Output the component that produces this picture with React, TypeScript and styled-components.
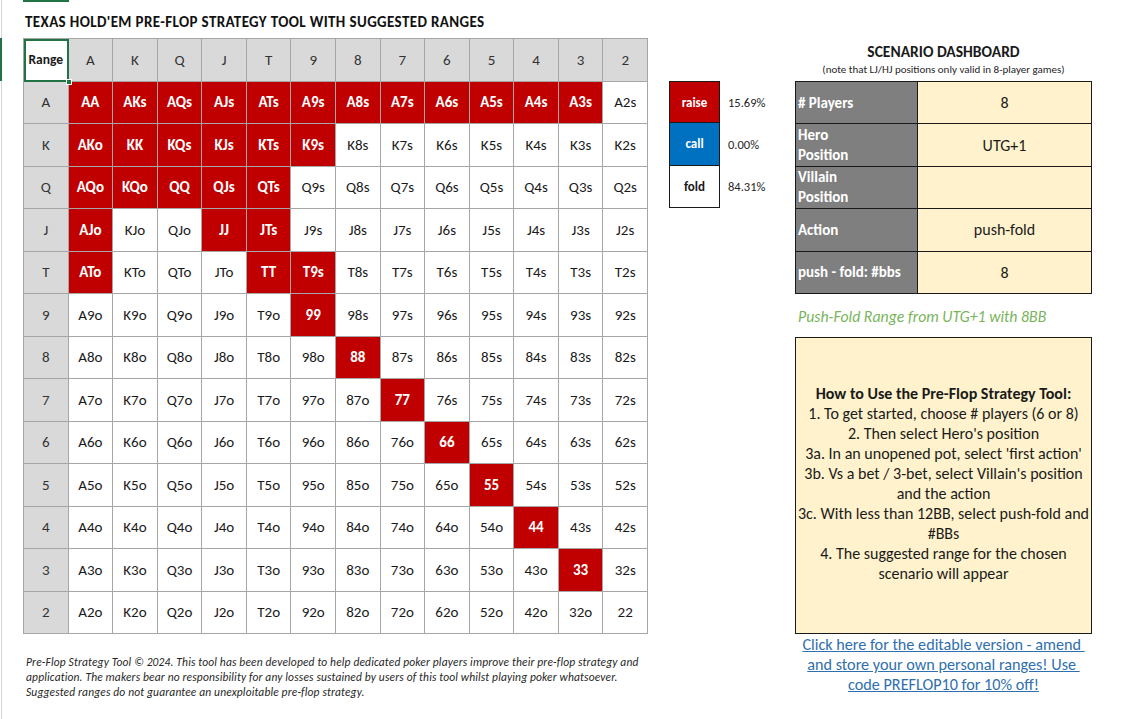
import React from "react";
import styled, { createGlobalStyle } from "styled-components";

const FONT = `"Carlito", "Lato", "Liberation Sans", sans-serif`;

const GlobalStyle = createGlobalStyle`
  html, body { margin: 0; padding: 0; background: #ffffff; }
  body { font-family: ${FONT}; color: #1a1a1a; }
  * { box-sizing: border-box; }
`;

const Page = styled.div`
  display: flex;
  width: 1140px;
  height: 719px;
  overflow: hidden;
  background: #fff;
`;

const Gutter = styled.div`
  width: 2px;
  flex: none;
  border-right: 1px solid #d6d6d6;
  padding-top: 38px;
`;

const GutterMark = styled.div`
  width: 2px;
  height: 43px;
  background: #217346;
`;

const Content = styled.div`
  flex: 1;
  padding-left: 21px;
  display: flex;
  flex-direction: column;
`;

const ColMark = styled.div`
  width: 46px;
  height: 2px;
  background: #217346;
`;

const Title = styled.h1`
  margin: 0;
  height: 36px;
  padding-top: 11px;
  padding-left: 2px;
  font-size: 15px;
  line-height: 18px;
  font-weight: 700;
  color: #111;
  letter-spacing: 0.38px;
  white-space: nowrap;
`;

const MainRow = styled.div`
  display: flex;
  align-items: flex-start;
`;

const LeftCol = styled.div`
  display: flex;
  flex-direction: column;
  width: 625px;
`;

const RangeGrid = styled.div`
  display: grid;
  grid-template-columns: repeat(14, 1fr);
  grid-auto-rows: 42.5px;
  width: 625px;
  border-top: 1px solid #a6a6a6;
  border-left: 1px solid #a6a6a6;
`;

type CellKind = "head" | "raise" | "fold" | "corner";

const Cell = styled.div<{ $kind: CellKind }>`
  position: relative;
  display: flex;
  align-items: center;
  justify-content: center;
  border-right: 1px solid #a6a6a6;
  border-bottom: 1px solid #a6a6a6;
  font-size: 15px;
  white-space: nowrap;
  background: ${(p) =>
    p.$kind === "head" ? "#d9d9d9" : p.$kind === "raise" ? "#c00000" : "#ffffff"};
  color: ${(p) => (p.$kind === "raise" ? "#ffffff" : p.$kind === "head" ? "#333" : "#1a1a1a")};
  font-weight: ${(p) => (p.$kind === "raise" || p.$kind === "corner" ? 700 : 400)};
  ${(p) =>
    p.$kind === "corner"
      ? `outline: 2px solid #217346; outline-offset: -2px; font-size: 13.5px;`
      : ""}
`;

const Handle = styled.span`
  position: absolute;
  right: -4px;
  bottom: -4px;
  width: 6px;
  height: 6px;
  background: #217346;
  border: 1px solid #fff;
  z-index: 2;
`;

const Footer = styled.div`
  margin: 21px 0 0 3px;
  font-size: 11.5px;
  line-height: 15px;
  font-style: italic;
  color: #262626;
  letter-spacing: 0.15px;
`;

const FooterLine = styled.span`
  display: block;
  white-space: nowrap;
`;

const Legend = styled.div`
  margin-left: 21px;
  margin-top: 43px;
  width: 126px;
  display: grid;
  grid-template-columns: 51px 1fr;
  grid-auto-rows: 42.3px;
  column-gap: 8px;
`;

const LegendBox = styled.div<{ $bg: string; $fg: string }>`
  display: flex;
  align-items: center;
  justify-content: center;
  background: ${(p) => p.$bg};
  color: ${(p) => p.$fg};
  border: 1px solid #1a1a1a;
  margin-top: -1px;
  font-size: 13px;
  font-weight: 700;
  &:first-child { margin-top: 0; }
`;

const LegendPct = styled.div`
  display: flex;
  align-items: center;
  font-size: 12.5px;
  color: #262626;
`;

const Dash = styled.div`
  width: 297px;
  display: flex;
  flex-direction: column;
`;

const DashTitle = styled.div`
  text-align: center;
  font-weight: 700;
  font-size: 15.5px;
  line-height: 18px;
  padding-top: 5px;
`;

const DashNote = styled.div`
  text-align: center;
  font-size: 11px;
  line-height: 13px;
  margin-top: 2px;
  height: 18px;
  color: #262626;
`;

const DashTable = styled.div`
  display: grid;
  grid-template-columns: 122px 1fr;
  grid-auto-rows: 42.4px;
  border-top: 1px solid #1a1a1a;
  border-left: 1px solid #1a1a1a;
`;

const DashLabel = styled.div`
  display: flex;
  align-items: center;
  padding-left: 2px;
  background: #7f7f7f;
  color: #fff;
  font-weight: 700;
  font-size: 15px;
  line-height: 20px;
  border-right: 1px solid #1a1a1a;
  border-bottom: 1px solid #1a1a1a;
`;

const DashValue = styled.div`
  display: flex;
  align-items: center;
  justify-content: center;
  background: #fff2cc;
  font-size: 16px;
  border-right: 1px solid #1a1a1a;
  border-bottom: 1px solid #1a1a1a;
`;

const RangeCaption = styled.div`
  margin-top: 13px;
  height: 30px;
  padding-left: 3px;
  font-style: italic;
  font-size: 15.8px;
  line-height: 20px;
  color: #79b45b;
`;

const HowTo = styled.div`
  height: 297px;
  padding-bottom: 3px;
  background: #fff2cc;
  border: 1px solid #1a1a1a;
  display: flex;
  flex-direction: column;
  align-items: center;
  justify-content: center;
  font-size: 16px;
  line-height: 20px;
  color: #1a1a1a;
  text-align: center;
`;

const HowLine = styled.span<{ $bold?: boolean }>`
  display: block;
  white-space: nowrap;
  font-weight: ${(p) => (p.$bold ? 700 : 400)};
`;

const Promo = styled.a`
  display: block;
  text-align: center;
  font-size: 16.2px;
  line-height: 20px;
  color: #2f6fae;
  text-decoration: underline;
  padding-top: 1px;
`;

const PromoLine = styled.span`
  display: block;
  white-space: pre;
`;

const RANKS = ["A", "K", "Q", "J", "T", "9", "8", "7", "6", "5", "4", "3", "2"];

const RAISE = new Set([
  "AA", "AKs", "AQs", "AJs", "ATs", "A9s", "A8s", "A7s", "A6s", "A5s", "A4s", "A3s",
  "AKo", "KK", "KQs", "KJs", "KTs", "K9s",
  "AQo", "KQo", "QQ", "QJs", "QTs",
  "AJo", "JJ", "JTs",
  "ATo", "TT", "T9s",
  "99", "88", "77", "66", "55", "44", "33",
]);

function hand(i: number, j: number): string {
  if (i === j) return RANKS[i] + RANKS[j];
  if (j > i) return RANKS[i] + RANKS[j] + "s";
  return RANKS[j] + RANKS[i] + "o";
}

export default function App() {
  const cells: React.ReactNode[] = [];
  cells.push(
    <Cell key="corner" $kind="corner">
      Range
      <Handle />
    </Cell>
  );
  RANKS.forEach((r) =>
    cells.push(
      <Cell key={"h" + r} $kind="head">
        {r}
      </Cell>
    )
  );
  RANKS.forEach((r, i) => {
    cells.push(
      <Cell key={"r" + r} $kind="head">
        {r}
      </Cell>
    );
    RANKS.forEach((_, j) => {
      const h = hand(i, j);
      cells.push(
        <Cell key={h} $kind={RAISE.has(h) ? "raise" : "fold"}>
          {h}
        </Cell>
      );
    });
  });

  return (
    <>
      <GlobalStyle />
      <Page>
        <Gutter>
          <GutterMark />
        </Gutter>
        <Content>
          <ColMark />
          <Title>TEXAS HOLD'EM PRE-FLOP STRATEGY TOOL WITH SUGGESTED RANGES</Title>
          <MainRow>
            <LeftCol>
              <RangeGrid>{cells}</RangeGrid>
              <Footer>
                <FooterLine>
                  Pre-Flop Strategy Tool © 2024. This tool has been developed to help dedicated poker
                  players improve their pre-flop strategy and
                </FooterLine>
                <FooterLine>
                  application. The makers bear no responsibility for any losses sustained by users of
                  this tool whilst playing poker whatsoever.
                </FooterLine>
                <FooterLine>
                  Suggested ranges do not guarantee an unexploitable pre-flop strategy.
                </FooterLine>
              </Footer>
            </LeftCol>
            <Legend>
              <LegendBox $bg="#c00000" $fg="#ffffff">raise</LegendBox>
              <LegendPct>15.69%</LegendPct>
              <LegendBox $bg="#0070c0" $fg="#ffffff">call</LegendBox>
              <LegendPct>0.00%</LegendPct>
              <LegendBox $bg="#ffffff" $fg="#1a1a1a">fold</LegendBox>
              <LegendPct>84.31%</LegendPct>
            </Legend>
            <Dash>
              <DashTitle>SCENARIO DASHBOARD</DashTitle>
              <DashNote>(note that LJ/HJ positions only valid in 8-player games)</DashNote>
              <DashTable>
                <DashLabel># Players</DashLabel>
                <DashValue>8</DashValue>
                <DashLabel>
                  Hero
                  <br />
                  Position
                </DashLabel>
                <DashValue>UTG+1</DashValue>
                <DashLabel>
                  Villain
                  <br />
                  Position
                </DashLabel>
                <DashValue></DashValue>
                <DashLabel>Action</DashLabel>
                <DashValue>push-fold</DashValue>
                <DashLabel>push - fold: #bbs</DashLabel>
                <DashValue>8</DashValue>
              </DashTable>
              <RangeCaption>Push-Fold Range from UTG+1 with 8BB</RangeCaption>
              <HowTo>
                <HowLine $bold>How to Use the Pre-Flop Strategy Tool:</HowLine>
                <HowLine>1. To get started, choose # players (6 or 8)</HowLine>
                <HowLine>2. Then select Hero's position</HowLine>
                <HowLine>3a. In an unopened pot, select 'first action'</HowLine>
                <HowLine>3b. Vs a bet / 3-bet, select Villain's position</HowLine>
                <HowLine>and the action</HowLine>
                <HowLine>3c. With less than 12BB, select push-fold and</HowLine>
                <HowLine>#BBs</HowLine>
                <HowLine>4. The suggested range for the chosen</HowLine>
                <HowLine>scenario will appear</HowLine>
              </HowTo>
              <Promo href="#">
                <PromoLine>Click here for the editable version - amend </PromoLine>
                <PromoLine>and store your own personal ranges! Use </PromoLine>
                <PromoLine>code PREFLOP10 for 10% off!</PromoLine>
              </Promo>
            </Dash>
          </MainRow>
        </Content>
      </Page>
    </>
  );
}
